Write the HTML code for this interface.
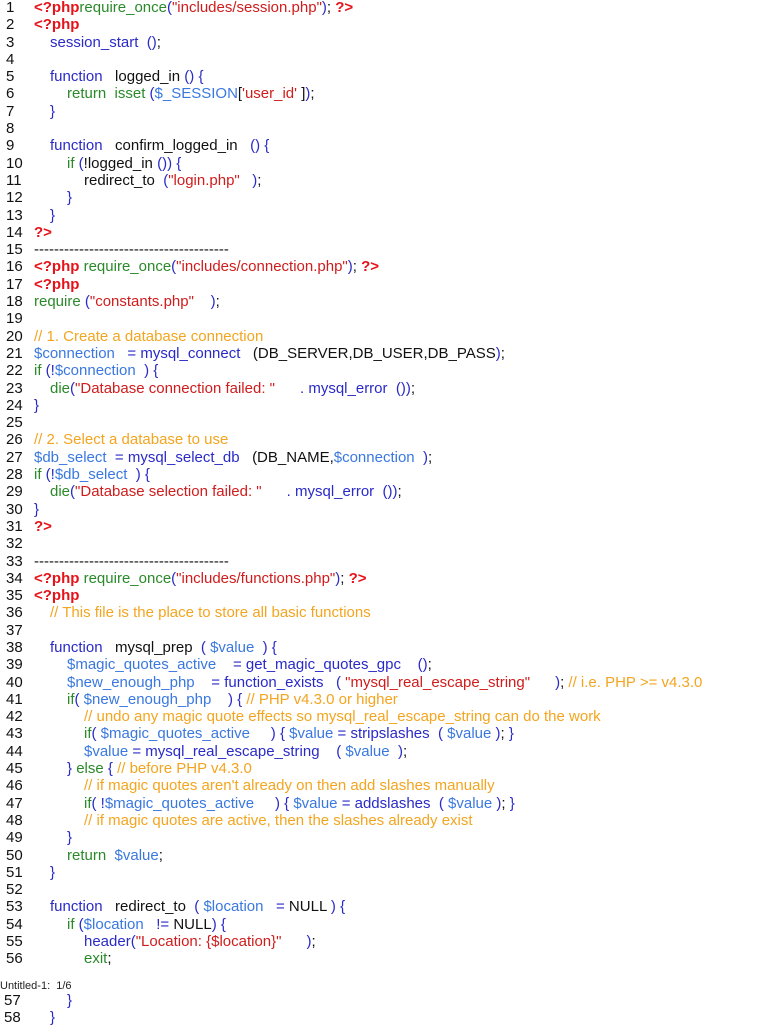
<!DOCTYPE html>
<html><head><meta charset="utf-8"><style>
body{margin:0;background:#fff;width:768px;height:1024px;overflow:hidden;position:relative;font-family:"Liberation Sans",Arial,sans-serif;}
.code{position:absolute;left:0;top:-1px;font-size:15px;line-height:17.31px;color:#111;}
.l{height:17.31px;position:relative;width:768px}
.n{position:absolute;left:6px;top:0}
.t{position:absolute;left:34px;top:0;white-space:pre}
.i1{left:50px}.i2{left:67px}.i3{left:84px}
.r{color:#e5121a;font-weight:bold}
.s{color:#d01c1c}
.g{color:#2a8a2a}
.b{color:#2a2ac8}
.v{color:#3a78e0}
.c{color:#f3a51f}
.foot{position:absolute;left:0;top:980px;font-size:11px;color:#222;white-space:pre}
.code2{position:absolute;left:0;top:992px;font-size:15px;line-height:17.31px;color:#111}
</style></head><body>
<div class="code">
<div class="l"><span class="n">1</span><span class="t"><span class="r">&lt;?php</span><span class="g">require_once</span><span class="b">(</span><span class="s">"includes/session.php"</span><span class="b">)</span>; <span class="r">?&gt;</span></span></div>
<div class="l"><span class="n">2</span><span class="t"><span class="r">&lt;?php</span></span></div>
<div class="l"><span class="n">3</span><span class="t i1"><span class="b">session_start  ()</span>;</span></div>
<div class="l"><span class="n">4</span></div>
<div class="l"><span class="n">5</span><span class="t i1"><span class="b">function</span>   logged_in <span class="b">() {</span></span></div>
<div class="l"><span class="n">6</span><span class="t i2"><span class="g">return  isset</span> <span class="b">(</span><span class="v">$_SESSION</span>[<span class="s">'user_id'</span> ]<span class="b">)</span>;</span></div>
<div class="l"><span class="n">7</span><span class="t i1"><span class="b">}</span></span></div>
<div class="l"><span class="n">8</span></div>
<div class="l"><span class="n">9</span><span class="t i1"><span class="b">function</span>   confirm_logged_in   <span class="b">() {</span></span></div>
<div class="l"><span class="n">10</span><span class="t i2"><span class="g">if</span> <span class="b">(</span>!logged_in <span class="b">()) {</span></span></div>
<div class="l"><span class="n">11</span><span class="t i3">redirect_to  <span class="b">(</span><span class="s">"login.php"</span>   <span class="b">)</span>;</span></div>
<div class="l"><span class="n">12</span><span class="t i2"><span class="b">}</span></span></div>
<div class="l"><span class="n">13</span><span class="t i1"><span class="b">}</span></span></div>
<div class="l"><span class="n">14</span><span class="t"><span class="r">?&gt;</span></span></div>
<div class="l"><span class="n">15</span><span class="t">---------------------------------------</span></div>
<div class="l"><span class="n">16</span><span class="t"><span class="r">&lt;?php</span> <span class="g">require_once</span><span class="b">(</span><span class="s">"includes/connection.php"</span><span class="b">)</span>; <span class="r">?&gt;</span></span></div>
<div class="l"><span class="n">17</span><span class="t"><span class="r">&lt;?php</span></span></div>
<div class="l"><span class="n">18</span><span class="t"><span class="g">require</span> <span class="b">(</span><span class="s">"constants.php"</span>    <span class="b">)</span>;</span></div>
<div class="l"><span class="n">19</span></div>
<div class="l"><span class="n">20</span><span class="t"><span class="c">// 1. Create a database connection</span></span></div>
<div class="l"><span class="n">21</span><span class="t"><span class="v">$connection</span>   <span class="b">= mysql_connect</span>   (DB_SERVER,DB_USER,DB_PASS<span class="b">)</span>;</span></div>
<div class="l"><span class="n">22</span><span class="t"><span class="g">if</span> <span class="b">(!</span><span class="v">$connection</span>  <span class="b">) {</span></span></div>
<div class="l"><span class="n">23</span><span class="t i1"><span class="g">die</span><span class="b">(</span><span class="s">"Database connection failed: "</span>      <span class="b">. mysql_error  ())</span>;</span></div>
<div class="l"><span class="n">24</span><span class="t"><span class="b">}</span></span></div>
<div class="l"><span class="n">25</span></div>
<div class="l"><span class="n">26</span><span class="t"><span class="c">// 2. Select a database to use</span></span></div>
<div class="l"><span class="n">27</span><span class="t"><span class="v">$db_select</span>  <span class="b">= mysql_select_db</span>   (DB_NAME,<span class="v">$connection</span>  <span class="b">)</span>;</span></div>
<div class="l"><span class="n">28</span><span class="t"><span class="g">if</span> <span class="b">(!</span><span class="v">$db_select</span>  <span class="b">) {</span></span></div>
<div class="l"><span class="n">29</span><span class="t i1"><span class="g">die</span><span class="b">(</span><span class="s">"Database selection failed: "</span>      <span class="b">. mysql_error  ())</span>;</span></div>
<div class="l"><span class="n">30</span><span class="t"><span class="b">}</span></span></div>
<div class="l"><span class="n">31</span><span class="t"><span class="r">?&gt;</span></span></div>
<div class="l"><span class="n">32</span></div>
<div class="l"><span class="n">33</span><span class="t">---------------------------------------</span></div>
<div class="l"><span class="n">34</span><span class="t"><span class="r">&lt;?php</span> <span class="g">require_once</span><span class="b">(</span><span class="s">"includes/functions.php"</span><span class="b">)</span>; <span class="r">?&gt;</span></span></div>
<div class="l"><span class="n">35</span><span class="t"><span class="r">&lt;?php</span></span></div>
<div class="l"><span class="n">36</span><span class="t i1"><span class="c">// This file is the place to store all basic functions</span></span></div>
<div class="l"><span class="n">37</span></div>
<div class="l"><span class="n">38</span><span class="t i1"><span class="b">function</span>   mysql_prep  <span class="b">(</span> <span class="v">$value</span>  <span class="b">) {</span></span></div>
<div class="l"><span class="n">39</span><span class="t i2"><span class="v">$magic_quotes_active</span>    <span class="b">= get_magic_quotes_gpc    ()</span>;</span></div>
<div class="l"><span class="n">40</span><span class="t i2"><span class="v">$new_enough_php</span>    <span class="b">= function_exists   (</span> <span class="s">"mysql_real_escape_string"</span>      <span class="b">)</span>; <span class="c">// i.e. PHP &gt;= v4.3.0</span></span></div>
<div class="l"><span class="n">41</span><span class="t i2"><span class="g">if</span><span class="b">(</span> <span class="v">$new_enough_php</span>    <span class="b">) {</span> <span class="c">// PHP v4.3.0 or higher</span></span></div>
<div class="l"><span class="n">42</span><span class="t i3"><span class="c">// undo any magic quote effects so mysql_real_escape_string can do the work</span></span></div>
<div class="l"><span class="n">43</span><span class="t i3"><span class="g">if</span><span class="b">(</span> <span class="v">$magic_quotes_active</span>     <span class="b">) {</span> <span class="v">$value</span> <span class="b">= stripslashes  (</span> <span class="v">$value</span> <span class="b">)</span>; <span class="b">}</span></span></div>
<div class="l"><span class="n">44</span><span class="t i3"><span class="v">$value</span> <span class="b">= mysql_real_escape_string    (</span> <span class="v">$value</span>  <span class="b">)</span>;</span></div>
<div class="l"><span class="n">45</span><span class="t i2"><span class="b">} </span><span class="g">else</span><span class="b"> {</span> <span class="c">// before PHP v4.3.0</span></span></div>
<div class="l"><span class="n">46</span><span class="t i3"><span class="c">// if magic quotes aren't already on then add slashes manually</span></span></div>
<div class="l"><span class="n">47</span><span class="t i3"><span class="g">if</span><span class="b">( !</span><span class="v">$magic_quotes_active</span>     <span class="b">) {</span> <span class="v">$value</span> <span class="b">= addslashes  (</span> <span class="v">$value</span> <span class="b">)</span>; <span class="b">}</span></span></div>
<div class="l"><span class="n">48</span><span class="t i3"><span class="c">// if magic quotes are active, then the slashes already exist</span></span></div>
<div class="l"><span class="n">49</span><span class="t i2"><span class="b">}</span></span></div>
<div class="l"><span class="n">50</span><span class="t i2"><span class="g">return</span>  <span class="v">$value</span>;</span></div>
<div class="l"><span class="n">51</span><span class="t i1"><span class="b">}</span></span></div>
<div class="l"><span class="n">52</span></div>
<div class="l"><span class="n">53</span><span class="t i1"><span class="b">function</span>   redirect_to  <span class="b">(</span> <span class="v">$location</span>   <span class="b">=</span> NULL <span class="b">) {</span></span></div>
<div class="l"><span class="n">54</span><span class="t i2"><span class="g">if</span> <span class="b">(</span><span class="v">$location</span>   <span class="b">!=</span> NULL<span class="b">) {</span></span></div>
<div class="l"><span class="n">55</span><span class="t i3"><span class="b">header</span><span class="b">(</span><span class="s">"Location: {$location}"</span>      <span class="b">)</span>;</span></div>
<div class="l"><span class="n">56</span><span class="t i3"><span class="g">exit</span>;</span></div>
</div>
<div class="foot">Untitled-1:  1/6</div>
<div class="code2">
<div class="l"><span class="n" style="left:4px">57</span><span class="t i2"><span class="b">}</span></span></div>
<div class="l"><span class="n" style="left:4px">58</span><span class="t i1"><span class="b">}</span></span></div>
</div>
</body></html>
